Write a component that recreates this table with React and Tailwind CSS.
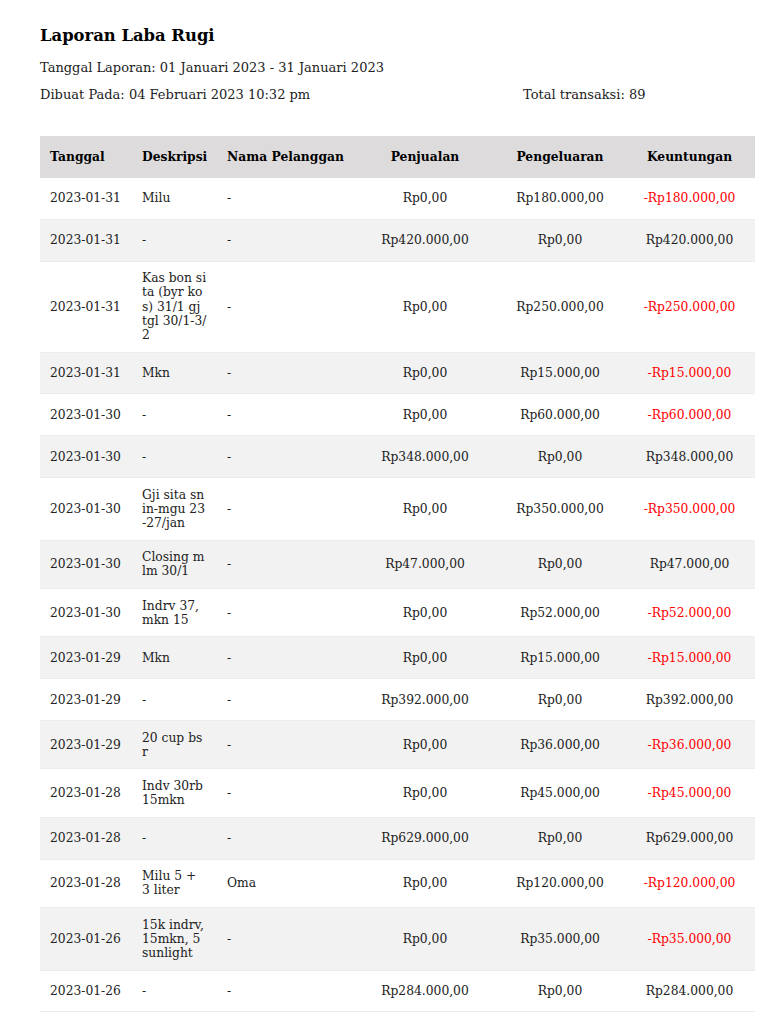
import React from "react";

const rows = [
  ["2023-01-31", "Milu", "-", "Rp0,00", "Rp180.000,00", "-Rp180.000,00"],
  ["2023-01-31", "-", "-", "Rp420.000,00", "Rp0,00", "Rp420.000,00"],
  ["2023-01-31", "Kas bon sita (byr kos) 31/1 gj tgl 30/1-3/2", "-", "Rp0,00", "Rp250.000,00", "-Rp250.000,00"],
  ["2023-01-31", "Mkn", "-", "Rp0,00", "Rp15.000,00", "-Rp15.000,00"],
  ["2023-01-30", "-", "-", "Rp0,00", "Rp60.000,00", "-Rp60.000,00"],
  ["2023-01-30", "-", "-", "Rp348.000,00", "Rp0,00", "Rp348.000,00"],
  ["2023-01-30", "Gji sita snin-mgu 23-27/jan", "-", "Rp0,00", "Rp350.000,00", "-Rp350.000,00"],
  ["2023-01-30", "Closing mlm 30/1", "-", "Rp47.000,00", "Rp0,00", "Rp47.000,00"],
  ["2023-01-30", "Indrv 37, mkn 15", "-", "Rp0,00", "Rp52.000,00", "-Rp52.000,00"],
  ["2023-01-29", "Mkn", "-", "Rp0,00", "Rp15.000,00", "-Rp15.000,00"],
  ["2023-01-29", "-", "-", "Rp392.000,00", "Rp0,00", "Rp392.000,00"],
  ["2023-01-29", "20 cup bsr", "-", "Rp0,00", "Rp36.000,00", "-Rp36.000,00"],
  ["2023-01-28", "Indv 30rb 15mkn", "-", "Rp0,00", "Rp45.000,00", "-Rp45.000,00"],
  ["2023-01-28", "-", "-", "Rp629.000,00", "Rp0,00", "Rp629.000,00"],
  ["2023-01-28", "Milu 5 + 3 liter", "Oma", "Rp0,00", "Rp120.000,00", "-Rp120.000,00"],
  ["2023-01-26", "15k indrv, 15mkn, 5 sunlight", "-", "Rp0,00", "Rp35.000,00", "-Rp35.000,00"],
  ["2023-01-26", "-", "-", "Rp284.000,00", "Rp0,00", "Rp284.000,00"],
];

function App() {
  return (
    <div
      className="min-h-[1024px] bg-white px-10 pt-[26px] text-[#222]"
      style={{ fontFamily: '"DejaVu Serif", serif' }}
    >
      <h1 className="text-[16.4px] font-bold leading-[20px] text-black">
        Laporan Laba Rugi
      </h1>
      <p className="mt-[14px] text-[13px] leading-[15px]">
        Tanggal Laporan: 01 Januari 2023 - 31 Januari 2023
      </p>
      <div className="mt-[12px] flex text-[13px] leading-[15px]">
        <p className="w-[483px]">Dibuat Pada: 04 Februari 2023 10:32 pm</p>
        <p>Total transaksi: 89</p>
      </div>

      <table className="mt-[34px] w-[715px] table-fixed border-collapse text-[12.3px] leading-[14.2px]">
        <thead>
          <tr className="h-[41.5px] bg-[#dddbdc] text-black">
            <th className="w-[92px] px-[10px] text-left font-bold">Tanggal</th>
            <th className="w-[85px] px-[10px] text-left font-bold">Deskripsi</th>
            <th className="w-[137px] px-[10px] text-left font-bold">Nama Pelanggan</th>
            <th className="w-[142px] px-[10px] text-center font-bold">Penjualan</th>
            <th className="w-[128px] px-[10px] text-center font-bold">Pengeluaran</th>
            <th className="w-[131px] px-[10px] text-center font-bold">Keuntungan</th>
          </tr>
        </thead>
        <tbody>
          {rows.map((r, index) => (
            <tr
              key={index}
              className={`h-[41.8px] border-b border-[#ececec] ${
                index % 2 !== 0 ? "bg-[#f2f2f2]" : "bg-white"
              }`}
            >
              <td className="px-[10px] py-[9.5px]">{r[0]}</td>
              <td className="px-[10px] py-[9.5px] break-all">{r[1]}</td>
              <td className="px-[10px] py-[9.5px]">{r[2]}</td>
              <td className="px-[10px] py-[9.5px] text-center">{r[3]}</td>
              <td className="px-[10px] py-[9.5px] text-center">{r[4]}</td>
              <td
                className={`px-[10px] py-[9.5px] text-center ${
                  r[5].startsWith("-") ? "text-[#ff0000]" : ""
                }`}
              >
                {r[5]}
              </td>
            </tr>
          ))}
        </tbody>
      </table>
    </div>
  );
}

export default App;
